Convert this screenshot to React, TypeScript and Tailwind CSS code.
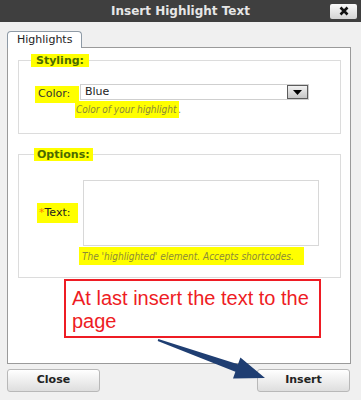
export default function App() {
  const ui = { fontFamily: '"DejaVu Sans", Verdana, sans-serif' }
  const hint = { fontFamily: '"DejaVu Sans Condensed", "DejaVu Sans", Verdana, sans-serif' }

  return (
    <div
      className="relative w-[361px] h-[400px] overflow-hidden bg-[#f0f0f0] text-[#222]"
      style={ui}
    >
      {/* title bar */}
      <div className="flex h-[22px] items-center bg-[#3f3f3f]">
        <div className="w-[31px]" />
        <div className="flex-1 text-center text-[12px] font-bold text-[#e6e6e6]">
          Insert Highlight Text
        </div>
        <button className="mr-[4px] flex h-[15px] w-[27px] items-center justify-center rounded-[2px] bg-gradient-to-b from-[#fafafa] to-[#d4d4d4]">
          <svg width="10" height="10" viewBox="0 0 10 10">
            <path d="M1.5 1.5 L8.5 8.5 M8.5 1.5 L1.5 8.5" stroke="#111" strokeWidth="2.6" />
          </svg>
        </button>
      </div>

      {/* tabs */}
      <div className="pl-[7px] pr-[10px] pt-[9px]">
        <div className="relative z-10 -mb-px flex h-[17px] w-[75px] items-center rounded-t-[4px] border border-b-0 border-[#8e9aa6] bg-white pl-[9px] text-[11px] text-[#222]">
          Highlights
        </div>

        {/* panel */}
        <div className="h-[317px] border border-[#9a9a9a] bg-white pl-[10px] pr-[9px] pt-[6px]">
          <fieldset className="h-[80px] border border-[#dcdcdc]">
            <legend className="ml-[12px] bg-[#ffff00] px-[5px] text-[11px] font-bold leading-[13px] text-[#4b6a00]">
              Styling:
            </legend>
            <div className="mt-[19px] flex items-start pl-[16px]">
              <div className="flex h-[17px] w-[44px] items-center bg-[#ffff00] pl-[3px] text-[11px] text-[#333]">
                Color:
              </div>
              <div className="ml-[1px] -mt-[2px] flex h-[16px] w-[229px] items-center justify-between border border-[#cfcfcf] bg-white pl-[4px] text-[11px] text-[#222]">
                <span>Blue</span>
                <span className="flex h-[14px] w-[21px] items-center justify-center border border-[#5c5c5c] bg-gradient-to-b from-[#f2f2f2] to-[#c6c6c6]">
                  <svg width="9" height="5" viewBox="0 0 9 5">
                    <path d="M0 0 H9 L4.5 5 Z" fill="#000" />
                  </svg>
                </span>
              </div>
            </div>
            <div
              className="ml-[56px] -mt-[2px] flex h-[17px] items-center whitespace-nowrap text-[10px] italic text-[#8c8a38]"
              style={hint}
            >
              <span className="flex h-[17px] items-center bg-[#ffff00] pl-[1px] pr-[2px]">Color of your highlight</span>
              <span>.</span>
            </div>
          </fieldset>

          <fieldset className="mt-[14px] h-[130px] border border-[#dcdcdc]">
            <legend className="ml-[15px] bg-[#ffff00] px-[3px] text-[11px] font-bold leading-[13px] text-[#4b6a00]">
              Options:
            </legend>
            <div className="mt-[19px] flex items-center pl-[18px]">
              <div className="flex h-[20px] w-[41px] items-center bg-[#ffff00] pl-[2px] text-[11px] text-[#222]">
                <span className="text-[#ff8000]">*</span>Text:
              </div>
              <div className="ml-[5px] h-[66px] w-[236px] border border-[#d8d8d8] bg-white" />
            </div>
            <div
              className="ml-[60px] mt-[1px] flex h-[18px] w-[225px] items-center whitespace-nowrap bg-[#ffff00] pl-[3px] text-[10px] italic text-[#8c8a38]"
              style={hint}
            >
              The 'highlighted' element. Accepts shortcodes.
            </div>
          </fieldset>

          {/* annotation */}
          <div
            className="ml-[46px] mt-[1px] h-[59px] w-[257px] border-2 border-[#ee1c24] pl-[6px] pt-[6px] text-[20px] leading-[23px] text-[#ee1c24]"
            style={{ fontFamily: '"Liberation Sans", Arial, sans-serif' }}
          >
            At last insert the text to the page
          </div>
        </div>
      </div>

      {/* buttons */}
      <div className="mt-[5px] flex justify-between pl-[7px] pr-[11px]">
        <button className="h-[23px] w-[93px] rounded-[3px] border border-[#b8b8b8] bg-gradient-to-b from-[#ffffff] to-[#dedede] text-[11px] font-bold text-[#222]">
          Close
        </button>
        <button className="h-[23px] w-[93px] rounded-[3px] border border-[#b8b8b8] bg-gradient-to-b from-[#ffffff] to-[#dedede] text-[11px] font-bold text-[#222]">
          Insert
        </button>
      </div>

      {/* arrow */}
      <svg className="pointer-events-none absolute inset-0" width="361" height="400" viewBox="0 0 361 400">
        <polygon
          points="158.3,339.1 238,364.2 240.4,357.6 265,378 233,378.4 235.4,371.8 157.7,340.9"
          fill="#1f3e72"
        />
      </svg>
    </div>
  )
}
